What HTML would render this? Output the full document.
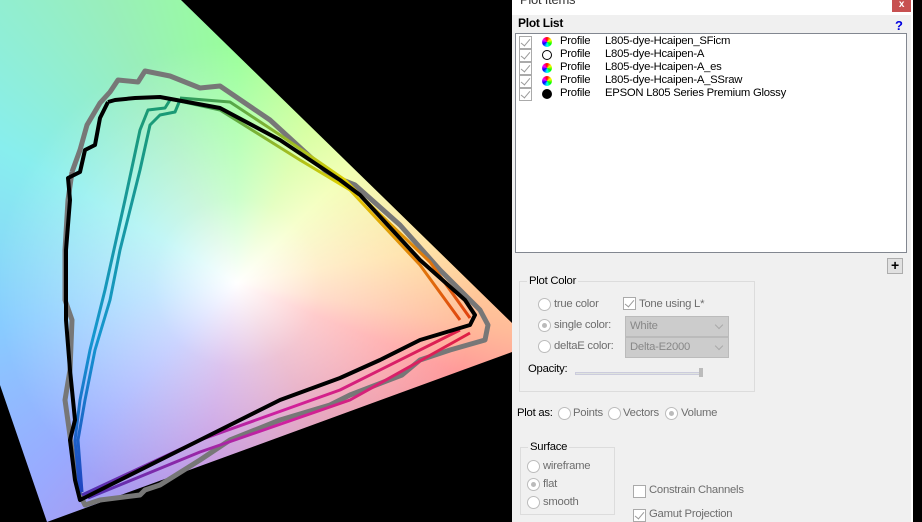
<!DOCTYPE html>
<html><head><meta charset="utf-8"><style>
*{margin:0;padding:0;box-sizing:border-box}
body{width:922px;height:522px;overflow:hidden;background:#000;position:relative;font-family:"Liberation Sans",sans-serif;font-size:11.3px;line-height:15px;letter-spacing:-0.25px;color:#000}
#plot{position:absolute;left:0;top:0;width:512px;height:522px}
#panel{position:absolute;left:512px;top:0;width:401px;height:522px;background:#f0f0f0}
.a{position:absolute;white-space:nowrap}
.g{color:#6d6d6d}
.cb{position:absolute;width:13px;height:13px;border:1px solid #aaa;background:#fff}
.cb.k::after{content:"";position:absolute;left:3px;top:0px;width:4px;height:8px;border:solid #999;border-width:0 1.5px 1.5px 0;transform:rotate(40deg)}
.rd{position:absolute;width:13px;height:13px;border:1px solid #bcbcbc;border-radius:50%;background:#fff}
.rd.s::after{content:"";position:absolute;left:3px;top:3px;width:5px;height:5px;border-radius:50%;background:#bbb}
.grp{position:absolute;border:1px solid #dcdcdc}
.lbl{position:absolute;background:#f0f0f0;padding:0 2px;top:-8px;left:7px;color:#000}
.combo{position:absolute;width:104px;height:21px;background:#ccc;border:1px solid #bbb;color:#888;padding:2px 4px}
.combo::after{content:"";position:absolute;right:6px;top:5px;width:5px;height:5px;border:solid #aaa;border-width:0 1px 1px 0;transform:rotate(45deg)}
.dot{position:absolute;width:10px;height:10px;border-radius:50%}
</style></head><body>
<svg id="plot" width="512" height="522" viewBox="0 0 512 522">
<defs>
<clipPath id="cp"><polygon points="0,0 181,0 512,323 512,352 47,522 0,385"/></clipPath>
<radialGradient id="wh" cx="237" cy="283" r="240" gradientUnits="userSpaceOnUse">
<stop offset="0" stop-color="#fff" stop-opacity="1"/><stop offset="0.35" stop-color="#fff" stop-opacity="0.5"/><stop offset="1" stop-color="#fff" stop-opacity="0"/></radialGradient>
<linearGradient id="lv" x1="0" y1="100" x2="0" y2="500" gradientUnits="userSpaceOnUse"><stop offset="0" stop-color="#1a9a70"/><stop offset="0.6" stop-color="#1596d0"/><stop offset="1" stop-color="#2040c0"/></linearGradient>
<linearGradient id="tr" x1="180" y1="100" x2="470" y2="320" gradientUnits="userSpaceOnUse"><stop offset="0" stop-color="#2a9a60"/><stop offset="0.5" stop-color="#e0d000"/><stop offset="1" stop-color="#e04010"/></linearGradient>
<linearGradient id="bt" x1="85" y1="495" x2="470" y2="320" gradientUnits="userSpaceOnUse"><stop offset="0" stop-color="#5030b0"/><stop offset="0.5" stop-color="#d020a0"/><stop offset="1" stop-color="#e02040"/></linearGradient>
</defs>
<g clip-path="url(#cp)">
<foreignObject x="0" y="0" width="512" height="522"><div xmlns="http://www.w3.org/1999/xhtml" style="width:512px;height:522px;background:conic-gradient(from 0deg at 237px 283px,#9f9 0deg,#cf8 25deg,#ef9 45deg,#fd9 80deg,#fb9 100deg,#f99 112deg,#d8a 150deg,#b8d 190deg,#9af 225deg,#8cf 260deg,#8ee 300deg,#9eb 335deg,#9f9 360deg)"></div></foreignObject>
<rect width="512" height="522" fill="url(#wh)"/>
</g>
<g fill="none" stroke-linejoin="round">
<polyline stroke="#777" stroke-width="5" points="72,172 80,150 87,125 100,103 110,92 118,80 138,82 145,71 170,76 200,88 220,86 270,120 330,175 355,185 400,225 440,270 480,310 488,325 485,340 450,350 420,360 402,375 350,395 330,405 280,420 230,440 200,460 160,485 145,490 140,495 100,500 85,505 80,495 72,450 65,400 70,370 72,320 65,300 65,250 68,200 72,172"/>
<polyline stroke="url(#lv)" stroke-width="3" points="180,100 175,112 160,115 150,125 140,170 120,250 110,300 95,350 85,400 78,440 82,492"/>
<polyline stroke="url(#lv)" stroke-width="3" points="170,100 165,108 148,110 140,130 125,200 105,290 90,350 80,400 75,440 80,495"/>
<polyline stroke="url(#tr)" stroke-width="3" points="175,100 220,110 300,160 350,190 420,265 460,320"/>
<polyline stroke="url(#tr)" stroke-width="3" points="180,98 230,102 280,135 345,180 360,195 430,262 470,318"/>
<polyline stroke="url(#bt)" stroke-width="3" points="82,495 200,440 340,390 460,330"/>
<polyline stroke="url(#bt)" stroke-width="3" points="88,498 200,452 350,400 470,333"/>
<polyline stroke="#000" stroke-width="4" points="108,102 115,100 135,98 160,97 220,108 280,140 340,180 360,195 420,260 465,300 475,315 470,325 420,340 380,360 340,378 280,400 200,440 120,480 90,495 80,500 75,480 70,440 75,420 70,370 66,320 66,250 70,200 68,178 80,172 85,150 95,145 100,118 108,102"/>
</g>
</svg>
<div id="panel">
<div class="a" style="left:0;top:0;width:401px;height:15px;background:#fff"></div>
<div class="a" style="left:8px;top:-8px;color:#333;font-size:13px">Plot Items</div>
<div class="a" style="left:380px;top:0;width:19px;height:12px;background:#c75050;color:#fff;font-size:10px;text-align:center;line-height:10px;font-weight:bold">x</div>
<div class="a" style="left:6px;top:16px;font-weight:bold;font-size:12px">Plot List</div>
<div class="a" style="left:383px;top:18px;font-weight:bold;color:#0000e0;font-size:13px">?</div>
<div class="a" style="left:3px;top:33px;width:392px;height:220px;background:#fff;border:1px solid #828790"></div>
<div class="cb k" style="left:7px;top:36px"></div><div class="dot" style="left:30px;top:37px;background:conic-gradient(red,yellow,lime,cyan,blue,magenta,red)"></div><div class="a" style="left:48px;top:34px">Profile</div><div class="a" style="left:93px;top:34px">L805-dye-Hcaipen_SFicm</div>
<div class="cb k" style="left:7px;top:49px"></div><div class="dot" style="left:30px;top:50px;border:1px solid #000;background:#fff"></div><div class="a" style="left:48px;top:47px">Profile</div><div class="a" style="left:93px;top:47px">L805-dye-Hcaipen-A</div>
<div class="cb k" style="left:7px;top:62px"></div><div class="dot" style="left:30px;top:63px;background:conic-gradient(red,yellow,lime,cyan,blue,magenta,red)"></div><div class="a" style="left:48px;top:60px">Profile</div><div class="a" style="left:93px;top:60px">L805-dye-Hcaipen-A_es</div>
<div class="cb k" style="left:7px;top:75px"></div><div class="dot" style="left:30px;top:76px;background:conic-gradient(red,yellow,lime,cyan,blue,magenta,red)"></div><div class="a" style="left:48px;top:73px">Profile</div><div class="a" style="left:93px;top:73px">L805-dye-Hcaipen-A_SSraw</div>
<div class="cb k" style="left:7px;top:88px"></div><div class="dot" style="left:30px;top:89px;background:#000"></div><div class="a" style="left:48px;top:86px">Profile</div><div class="a" style="left:93px;top:86px">EPSON L805 Series Premium Glossy</div>
<div class="a" style="left:375px;top:258px;width:16px;height:16px;border:1px solid #adadad;background:#e1e1e1;font-weight:bold;font-size:14px;line-height:13px;text-align:center">+</div>
<div class="grp" style="left:7px;top:281px;width:236px;height:111px"><span class="lbl">Plot Color</span></div>
<div class="rd" style="left:26px;top:298px"></div><div class="a g" style="left:42px;top:297px">true color</div>
<div class="cb k" style="left:111px;top:297px"></div><div class="a g" style="left:127px;top:297px">Tone using L*</div>
<div class="rd s" style="left:26px;top:319px"></div><div class="a g" style="left:42px;top:318px">single color:</div>
<div class="combo" style="left:113px;top:316px">White</div>
<div class="rd" style="left:26px;top:340px"></div><div class="a g" style="left:42px;top:339px">deltaE color:</div>
<div class="combo" style="left:113px;top:337px">Delta-E2000</div>
<div class="a" style="left:16px;top:362px">Opacity:</div>
<div class="a" style="left:63px;top:372px;width:128px;height:3px;background:#e0e4e0;border:1px solid #ccd"></div>
<div class="a" style="left:187px;top:368px;width:4px;height:9px;background:#bbb"></div>
<div class="a" style="left:5px;top:406px">Plot as:</div>
<div class="rd" style="left:46px;top:407px"></div><div class="a g" style="left:61px;top:406px">Points</div>
<div class="rd" style="left:96px;top:407px"></div><div class="a g" style="left:111px;top:406px">Vectors</div>
<div class="rd s" style="left:153px;top:407px"></div><div class="a g" style="left:169px;top:406px">Volume</div>
<div class="grp" style="left:8px;top:447px;width:95px;height:68px"><span class="lbl">Surface</span></div>
<div class="rd" style="left:15px;top:460px"></div><div class="a g" style="left:31px;top:459px">wireframe</div>
<div class="rd s" style="left:15px;top:478px"></div><div class="a g" style="left:31px;top:477px">flat</div>
<div class="rd" style="left:15px;top:496px"></div><div class="a g" style="left:31px;top:495px">smooth</div>
<div class="cb" style="left:121px;top:485px"></div><div class="a g" style="left:137px;top:483px">Constrain Channels</div>
<div class="cb k" style="left:121px;top:509px"></div><div class="a g" style="left:137px;top:507px">Gamut Projection</div>
</div>
<div class="a" style="left:911px;top:0;width:2px;height:522px;background:#fff"></div>
</body></html>
